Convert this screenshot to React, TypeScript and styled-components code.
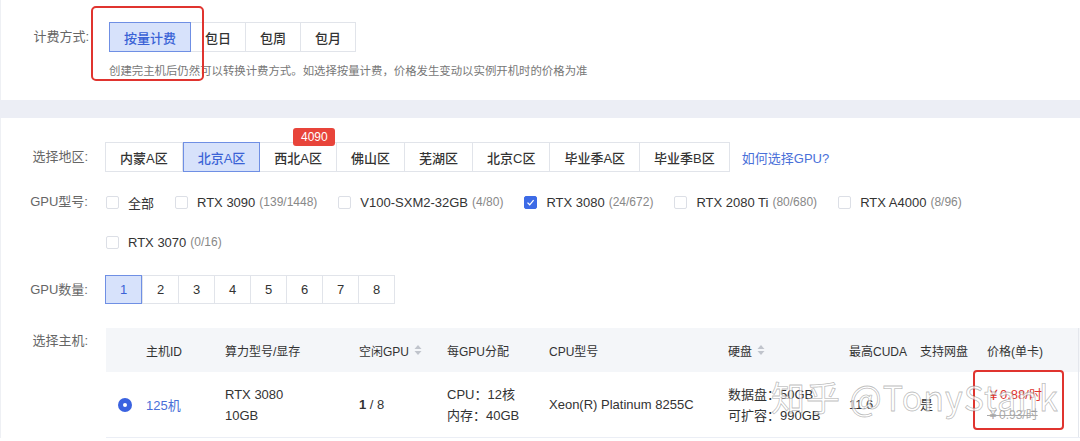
import React from 'react';
import styled, { createGlobalStyle } from 'styled-components';

const GlobalStyle = createGlobalStyle`
  html, body {
    margin: 0;
    padding: 0;
    background: #ffffff;
    overflow: hidden;
  }
  body {
    font-family: "Liberation Sans", "Noto Sans CJK SC", sans-serif;
    color: #333;
    -webkit-font-smoothing: antialiased;
  }
`;

const billing = ['按量计费', '包日', '包周', '包月'];

const regions = [
  { name: '内蒙A区' },
  { name: '北京A区', active: true },
  { name: '西北A区', badge: '4090' },
  { name: '佛山区' },
  { name: '芜湖区' },
  { name: '北京C区' },
  { name: '毕业季A区' },
  { name: '毕业季B区' },
];

const gpuModels = [
  { name: '全部' },
  { name: 'RTX 3090', count: '(139/1448)' },
  { name: 'V100-SXM2-32GB', count: '(4/80)' },
  { name: 'RTX 3080', count: '(24/672)', checked: true },
  { name: 'RTX 2080 Ti', count: '(80/680)' },
  { name: 'RTX A4000', count: '(8/96)' },
  { name: 'RTX 3070', count: '(0/16)' },
];

const columns = '40px 79px 134px 88px 102px 179px 121px 71px 67px 91px 140px';

function SortIcon() {
  return (
    <svg width="8" height="12" viewBox="0 0 8 12">
      <path d="M4 1 L7.5 5 H0.5 Z" fill="#c0c4cc" />
      <path d="M4 11 L7.5 7 H0.5 Z" fill="#c0c4cc" />
    </svg>
  );
}

function CheckMark() {
  return (
    <svg width="9" height="9" viewBox="0 0 9 9">
      <path d="M1.5 4.6 L3.7 6.8 L7.6 2.2" fill="none" stroke="#fff" strokeWidth="1.3" />
    </svg>
  );
}

export default function App() {
  return (
    <Page>
      <GlobalStyle />
      <Card $pad="22px 0 0" $h={78}>
        <FormRow>
          <Label $h={30} $w={88} $gap={20}>计费方式:</Label>
          <Field>
            <ButtonGroup>
              <Annotation />
              {billing.map((b, i) => (
                <SegButton key={b} $active={i === 0}>
                  {b}
                </SegButton>
              ))}
            </ButtonGroup>
            <Helper>创建完主机后仍然可以转换计费方式。如选择按量计费，价格发生变动以实例开机时的价格为准</Helper>
          </Field>
        </FormRow>
      </Card>
      <Band />
      <Card $pad="24px 0 0">
        <FormRow>
          <Label $h={30}>选择地区:</Label>
          <ButtonGroup>
            {regions.map((r) => (
              <SegButton key={r.name} $active={r.active}>
                {r.badge && <Badge>{r.badge}</Badge>}
                {r.name}
              </SegButton>
            ))}
            <HelpLink>如何选择GPU?</HelpLink>
          </ButtonGroup>
        </FormRow>

        <FormRow $mt={20}>
          <Label $h={20}>GPU型号:</Label>
          <CheckList>
            {gpuModels.map((g) => (
              <CheckItem key={g.name}>
                <CheckBox $checked={g.checked}>{g.checked && <CheckMark />}</CheckBox>
                <CheckText>{g.name}</CheckText>
                {g.count && <Count>{g.count}</Count>}
              </CheckItem>
            ))}
          </CheckList>
        </FormRow>

        <FormRow $mt={23}>
          <Label $h={29}>GPU数量:</Label>
          <ButtonGroup>
            {[1, 2, 3, 4, 5, 6, 7, 8].map((n) => (
              <NumButton key={n} $active={n === 1}>
                {n}
              </NumButton>
            ))}
          </ButtonGroup>
        </FormRow>

        <FormRow $mt={25}>
          <Label $h={24}>选择主机:</Label>
          <Table>
            <HeadRow>
              <HeadCell />
              <HeadCell>主机ID</HeadCell>
              <HeadCell>算力型号/显存</HeadCell>
              <HeadCell>
                空闲GPU <SortIcon />
              </HeadCell>
              <HeadCell>每GPU分配</HeadCell>
              <HeadCell>CPU型号</HeadCell>
              <HeadCell>
                硬盘 <SortIcon />
              </HeadCell>
              <HeadCell>最高CUDA</HeadCell>
              <HeadCell>支持网盘</HeadCell>
              <HeadCell>价格(单卡)</HeadCell>
              <HeadCell $divider />
            </HeadRow>
            <BodyRow>
              <Cell>
                <Radio />
              </Cell>
              <Cell>
                <HostLink>125机</HostLink>
              </Cell>
              <Cell>
                <Line>RTX 3080</Line>
                <Line>10GB</Line>
              </Cell>
              <Cell>
                <Line>
                  <b>1</b> / 8
                </Line>
              </Cell>
              <Cell>
                <Line>CPU：12核</Line>
                <Line>内存：40GB</Line>
              </Cell>
              <Cell>
                <Line>Xeon(R) Platinum 8255C</Line>
              </Cell>
              <Cell>
                <Line>数据盘：50GB</Line>
                <Line>可扩容：990GB</Line>
              </Cell>
              <Cell>
                <Line>11.6</Line>
              </Cell>
              <Cell>
                <Line>是</Line>
              </Cell>
              <Cell>
                <PriceBox />
                <Price>￥0.88/时</Price>
                <OldPrice>￥0.93/时</OldPrice>
              </Cell>
              <Cell $divider />
              <Watermark>知乎 @TonyStank</Watermark>
            </BodyRow>
          </Table>
        </FormRow>
      </Card>
    </Page>
  );
}

const Page = styled.div`
  width: 1080px;
  height: 441px;
  overflow: hidden;
  background: #fff;
`;

const Card = styled.section<{ $pad: string; $h?: number }>`
  padding: ${({ $pad }) => $pad};
  height: ${({ $h }) => ($h ? `${$h}px` : 'auto')};
  background: #fff;
  border-left: 1px solid #eef0f4;
`;

const Band = styled.div`
  height: 18px;
  background: #eceef5;
`;

const FormRow = styled.div<{ $mt?: number }>`
  display: flex;
  align-items: flex-start;
  margin-top: ${({ $mt }) => $mt ?? 0}px;
`;

const Label = styled.div<{ $h: number; $w?: number; $gap?: number }>`
  flex: none;
  width: ${({ $w }) => $w ?? 87}px;
  margin-right: ${({ $gap }) => $gap ?? 17}px;
  text-align: right;
  font-size: 13px;
  line-height: ${({ $h }) => $h}px;
  color: #666;
  white-space: nowrap;
`;

const Field = styled.div`
  display: flex;
  flex-direction: column;
`;

const ButtonGroup = styled.div`
  position: relative;
  display: flex;
  align-items: center;
`;

const SegButton = styled.div<{ $active?: boolean }>`
  position: relative;
  height: 30px;
  box-sizing: border-box;
  padding: 0 14px;
  margin-left: -1px;
  display: flex;
  align-items: center;
  font-size: 13px;
  font-weight: 500;
  white-space: nowrap;
  color: ${({ $active }) => ($active ? '#3a62d6' : '#333')};
  background: ${({ $active }) => ($active ? '#d7e2fb' : '#fff')};
  border: 1px solid ${({ $active }) => ($active ? '#6f8fe4' : '#e1e4ea')};
  z-index: ${({ $active }) => ($active ? 1 : 0)};
  &:first-child,
  &:nth-child(2) {
    margin-left: 0;
  }
`;

const NumButton = styled(SegButton)`
  width: 37px;
  height: 29px;
  padding: 0;
  justify-content: center;
  margin-left: -1px;
  &:first-child {
    margin-left: 0;
  }
`;

const Annotation = styled.span`
  position: absolute;
  left: -18px;
  top: -16px;
  width: 113px;
  height: 75px;
  box-sizing: border-box;
  border: 2px solid #e0342f;
  border-radius: 5px;
  z-index: 3;
  pointer-events: none;
`;

const Helper = styled.div`
  margin-top: 11px;
  font-size: 11.4px;
  line-height: 16px;
  color: #777;
`;

const Badge = styled.span`
  position: absolute;
  left: 33px;
  top: -15px;
  width: 42px;
  height: 18px;
  border-radius: 3px;
  background: #e8443a;
  color: #fff;
  font-size: 12px;
  line-height: 18px;
  text-align: center;
  font-weight: 500;
`;

const HelpLink = styled.span`
  margin-left: 12px;
  font-size: 13px;
  color: #4a70d9;
  white-space: nowrap;
`;

const CheckList = styled.div`
  width: 930px;
  display: flex;
  flex-wrap: wrap;
  row-gap: 20px;
`;

const CheckItem = styled.label`
  display: flex;
  align-items: center;
  height: 20px;
  margin-left: 1px;
  margin-right: 20px;
  white-space: nowrap;
`;

const CheckBox = styled.span<{ $checked?: boolean }>`
  width: 13px;
  height: 13px;
  box-sizing: border-box;
  border-radius: 2px;
  margin-right: 9px;
  display: flex;
  align-items: center;
  justify-content: center;
  border: 1px solid ${({ $checked }) => ($checked ? '#3d6be6' : '#dcdfe6')};
  background: ${({ $checked }) => ($checked ? '#3d6be6' : '#fff')};
`;

const CheckText = styled.span`
  font-size: 13px;
  color: #333;
`;

const Count = styled.span`
  margin-left: 4px;
  font-size: 12px;
  color: #888;
`;

const Table = styled.div`
  position: relative;
  margin-left: 1px;
  margin-top: -1px;
  flex: none;
`;

const HeadRow = styled.div`
  display: grid;
  grid-template-columns: ${columns};
  height: 44px;
  background: #f4f6f9;
`;

const HeadCell = styled.div<{ $divider?: boolean }>`
  display: flex;
  align-items: center;
  gap: 5px;
  font-size: 12px;
  color: #333;
  white-space: nowrap;
  border-left: ${({ $divider }) => ($divider ? '1px solid #e4e7ed' : 'none')};
`;

const BodyRow = styled.div`
  position: relative;
  display: grid;
  grid-template-columns: ${columns};
  height: 65px;
  border-bottom: 1px solid #ebeef5;
`;

const Cell = styled.div<{ $divider?: boolean }>`
  position: relative;
  display: flex;
  flex-direction: column;
  justify-content: center;
  font-size: 13px;
  color: #333;
  white-space: nowrap;
  border-left: ${({ $divider }) => ($divider ? '1px solid #e4e7ed' : 'none')};
`;

const Line = styled.div`
  line-height: 21px;
  b {
    font-weight: 700;
  }
`;

const Radio = styled.span`
  margin-left: 12px;
  width: 14px;
  height: 14px;
  border-radius: 50%;
  background: #3a62e0;
  position: relative;
  &::after {
    content: '';
    position: absolute;
    left: 5px;
    top: 5px;
    width: 4px;
    height: 4px;
    border-radius: 50%;
    background: #fff;
  }
`;

const HostLink = styled.span`
  color: #4a6fd8;
`;

const Price = styled.div`
  line-height: 21px;
  color: #e0342f;
`;

const OldPrice = styled.div`
  line-height: 21px;
  font-size: 12px;
  color: #aaa;
  text-decoration: line-through;
`;

const PriceBox = styled.span`
  position: absolute;
  left: -14px;
  top: -2px;
  width: 91px;
  height: 60px;
  box-sizing: border-box;
  border: 2px solid #e0342f;
  border-radius: 4px;
  z-index: 2;
`;

const Watermark = styled.div`
  position: absolute;
  left: 665px;
  top: 4px;
  font-family: "Noto Sans CJK SC", "Liberation Sans", sans-serif;
  font-size: 34px;
  line-height: 42px;
  letter-spacing: 1px;
  color: rgba(255, 255, 255, 0.7);
  -webkit-text-stroke: 0.8px rgba(110, 110, 110, 0.45);
  white-space: nowrap;
  z-index: 4;
  pointer-events: none;
`;
